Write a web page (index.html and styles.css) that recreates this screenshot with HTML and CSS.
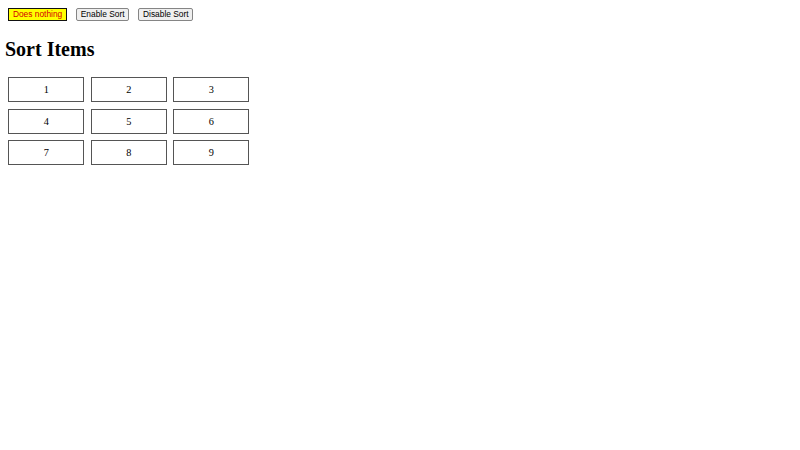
FILE: index.html
```html
<!DOCTYPE html>
<html>
<head>
<meta charset="utf-8">
<title>Sort Items</title>
<link rel="stylesheet" href="styles.css">
</head>
<body>
<div class="toolbar">
  <button class="btn btn-noop">Does nothing</button>
  <button class="btn">Enable Sort</button>
  <button class="btn">Disable Sort</button>
</div>
<h1 class="title">Sort Items</h1>
<div class="grid">
  <div class="item">1</div>
  <div class="item">2</div>
  <div class="item">3</div>
  <div class="item">4</div>
  <div class="item">5</div>
  <div class="item">6</div>
  <div class="item">7</div>
  <div class="item">8</div>
  <div class="item">9</div>
</div>
</body>
</html>
```
FILE: styles.css
```css
html, body {
  background: #fff;
}
body {
  margin: 5px;
  font-family: "Liberation Serif", "Times New Roman", serif;
  font-size: 10px;
  color: #000;
}
.toolbar {
  display: flex;
  gap: 9px;
  padding: 3.125px;
  align-items: flex-start;
}
.btn {
  font-family: "Liberation Sans", Arial, sans-serif;
  font-size: 8.4px;
  line-height: 9.6px;
  height: 13.3px;
  padding: 0 3.75px;
  margin: 0;
  background: #efefef;
  color: #000;
  border: 1px solid #858585;
  border-radius: 2px;
  box-sizing: border-box;
}
.btn-noop {
  background: #ffff00;
  color: #d40000;
  border: 1.6px solid #111;
  border-radius: 0;
}
.title {
  font-size: 20px;
  font-weight: bold;
  margin: 13px 0 13.4px 0;
  line-height: 23px;
}
.grid {
  display: grid;
  grid-template-columns: repeat(3, 76.25px);
  gap: 6.3px 6.25px;
  padding: 3.125px;
}
.item {
  height: 25.25px;
  box-sizing: border-box;
  border: 1px solid #555;
  display: flex;
  align-items: center;
  justify-content: center;
  font-size: 10.3px;
}
```
